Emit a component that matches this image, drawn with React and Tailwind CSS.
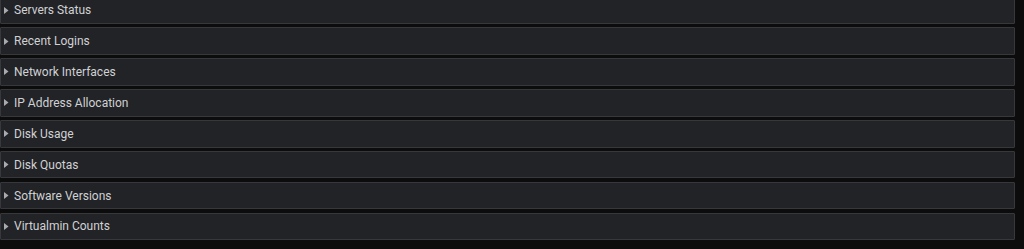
import React from 'react';

const sections = [
  'Servers Status',
  'Recent Logins',
  'Network Interfaces',
  'IP Address Allocation',
  'Disk Usage',
  'Disk Quotas',
  'Software Versions',
  'Virtualmin Counts',
];

function Panel({ title }) {
  return (
    <div className="h-[27.6px] mb-[3.3px] flex items-center bg-[#222327] border border-[#37383c] rounded-[1px]">
      <svg width="5" height="7" viewBox="0 0 5 7" className="ml-[3px] mr-[5px] shrink-0">
        <path d="M0 0 L4.5 3.5 L0 7 Z" fill="#a9aaad" />
      </svg>
      <span className="text-[12px] text-[#d0d1d3] leading-none">{title}</span>
    </div>
  );
}

export default function App() {
  return (
    <div
      className="w-[1024px] h-[249px] overflow-hidden bg-[#0c0c0c]"
      style={{ fontFamily: 'Roboto, "Noto Sans", sans-serif' }}
    >
      <div className="w-[1015px] -mt-[3.6px]">
        {sections.map((s) => (
          <Panel key={s} title={s} />
        ))}
      </div>
    </div>
  );
}
